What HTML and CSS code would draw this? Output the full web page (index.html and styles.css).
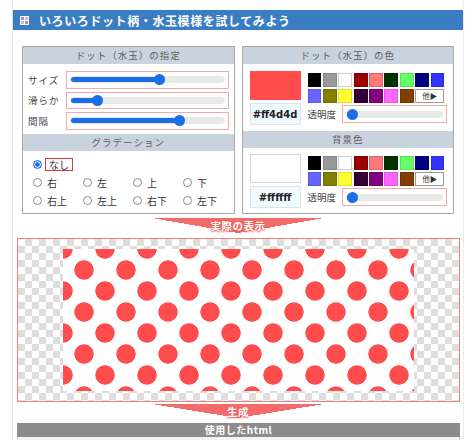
FILE: index.html
```html
<!DOCTYPE html>
<html lang="ja">
<head>
<meta charset="utf-8">
<title>いろいろドット柄・水玉模様を試してみよう</title>
<link rel="stylesheet" href="styles.css">
</head>
<body>
<div class="page">
  <h1 class="title">
    <svg class="ico" width="9" height="9" viewBox="0 0 9 9" aria-hidden="true">
      <rect x="0" y="0" width="9" height="9" fill="#ffffff"/>
      <rect x="1" y="1" width="3" height="3" fill="#9d8fe0"/>
      <rect x="5" y="1" width="3" height="3" fill="#c4b8f0"/>
      <rect x="1" y="5" width="3" height="3" fill="#c4b8f0"/>
      <rect x="5" y="5" width="3" height="3" fill="#9d8fe0"/>
    </svg>
    <span>いろいろドット柄・水玉模様を試してみよう</span>
  </h1>

  <div class="panels">
    <div class="panel">
      <div class="ph">ドット（水玉）の指定</div>
      <div class="sliders">
        <div class="srow"><span class="lbl">サイズ</span><div class="sbox"><input type="range" min="0" max="100" value="59" style="--p:58%"></div></div>
        <div class="srow"><span class="lbl">滑らか</span><div class="sbox"><input type="range" min="0" max="100" value="15" style="--p:17%"></div></div>
        <div class="srow"><span class="lbl">間隔</span><div class="sbox"><input type="range" min="0" max="100" value="73" style="--p:72%"></div></div>
      </div>
      <div class="ph">グラデーション</div>
      <div class="radios">
        <div class="rrow">
          <label class="ropt"><input type="radio" name="g" checked><span class="none">なし</span></label>
        </div>
        <div class="rrow rgrid">
          <label class="ropt"><input type="radio" name="g"><span>右</span></label>
          <label class="ropt"><input type="radio" name="g"><span>左</span></label>
          <label class="ropt"><input type="radio" name="g"><span>上</span></label>
          <label class="ropt"><input type="radio" name="g"><span>下</span></label>
        </div>
        <div class="rrow rgrid">
          <label class="ropt"><input type="radio" name="g"><span>右上</span></label>
          <label class="ropt"><input type="radio" name="g"><span>左上</span></label>
          <label class="ropt"><input type="radio" name="g"><span>右下</span></label>
          <label class="ropt"><input type="radio" name="g"><span>左下</span></label>
        </div>
      </div>
    </div>

    <div class="panel">
      <div class="ph">ドット（水玉）の色</div>
      <div class="csec">
        <div class="cleft">
          <div class="swatch sw-red"></div>
          <div class="hex">#ff4d4d</div>
        </div>
        <div class="cright">
          <div class="palette">
            <span class="cell c1"></span><span class="cell c2"></span><span class="cell c3"></span><span class="cell c4"></span><span class="cell c5"></span><span class="cell c6"></span><span class="cell c7"></span><span class="cell c8"></span><span class="cell c9"></span>
            <span class="cell c10"></span><span class="cell c11"></span><span class="cell c12"></span><span class="cell c13"></span><span class="cell c14"></span><span class="cell c15"></span><span class="cell c16"></span><span class="other">他▶</span>
          </div>
          <div class="alpha"><span class="albl">透明度</span><div class="sbox"><input type="range" min="0" max="100" value="0" style="--p:6%"></div></div>
        </div>
      </div>
      <div class="ph">背景色</div>
      <div class="csec csec2">
        <div class="cleft">
          <div class="swatch sw-white"></div>
          <div class="hex">#ffffff</div>
        </div>
        <div class="cright">
          <div class="palette">
            <span class="cell c1"></span><span class="cell c2"></span><span class="cell c3"></span><span class="cell c4"></span><span class="cell c5"></span><span class="cell c6"></span><span class="cell c7"></span><span class="cell c8"></span><span class="cell c9"></span>
            <span class="cell c10"></span><span class="cell c11"></span><span class="cell c12"></span><span class="cell c13"></span><span class="cell c14"></span><span class="cell c15"></span><span class="cell c16"></span><span class="other">他▶</span>
          </div>
          <div class="alpha"><span class="albl">透明度</span><div class="sbox"><input type="range" min="0" max="100" value="0" style="--p:6%"></div></div>
        </div>
      </div>
    </div>
  </div>

  <div class="arrow a1"><span>実際の表示</span></div>
  <div class="preview"><div class="dots"></div></div>
  <div class="arrow a2"><span>生成</span></div>
  <div class="codebar">使用したhtml</div>
  <div class="codearea"></div>
</div>
</body>
</html>
```

FILE: styles.css
```css
html, body {
  margin: 0;
  padding: 0;
  background: #fff;
}
body {
  font-family: "Noto Sans CJK JP", "Noto Sans", sans-serif;
  color: #333;
}
.page {
  margin-left: 12px;
  width: 452px;
  border-left: 1px solid #e0e0e0;
  border-right: 1px solid #ececec;
  padding-top: 10px;
  height: 440px;
  overflow: hidden;
  box-sizing: border-box;
}
.title {
  margin: 0;
  height: 20px;
  background: #3b7dc3;
  display: flex;
  align-items: center;
  padding-left: 7px;
  gap: 10px;
  color: #fff;
  font-size: 12px;
  font-weight: bold;
  letter-spacing: 0.6px;
}
.ico { display: block; flex: none; }

.panels {
  display: grid;
  grid-template-columns: 1fr 1fr;
  gap: 7px;
  padding: 16px 9px 0;
}
.panel {
  border: 1px solid #a9a9a9;
  background: #fff;
}
.ph {
  height: 17px;
  line-height: 17px;
  background: #c9d3de;
  text-align: center;
  font-size: 9.5px;
  color: #5e5e5e;
  letter-spacing: 1px;
}

/* sliders */
.sliders {
  padding: 7px 5px 4px;
  display: flex;
  flex-direction: column;
  gap: 3px;
}
.srow {
  display: flex;
  align-items: center;
  height: 17.5px;
}
.lbl {
  width: 38px;
  font-size: 9.5px;
  color: #444;
  letter-spacing: 1px;
}
.sbox {
  flex: 1;
  height: 100%;
  border: 1px solid #f2a9a9;
  box-sizing: border-box;
  padding: 0 4px;
  display: flex;
  align-items: center;
}
input[type=range] {
  -webkit-appearance: none;
  appearance: none;
  width: 100%;
  height: 11px;
  margin: 0;
  background: transparent;
  display: block;
}
input[type=range]::-webkit-slider-runnable-track {
  height: 5px;
  border-radius: 3px;
  background: linear-gradient(to right, #1a6fe6 var(--p), #e9e9e9 var(--p));
  box-shadow: 0 0 0 0.5px #cfcfcf;
}
input[type=range]::-webkit-slider-thumb {
  -webkit-appearance: none;
  width: 11px;
  height: 11px;
  border-radius: 50%;
  background: #1a6fe6;
  border: none;
  margin-top: -3px;
}

/* radios */
.radios {
  padding: 5px 0 3px 10px;
}
.rrow {
  height: 18px;
  display: flex;
  align-items: center;
}
.rgrid {
  display: grid;
  grid-template-columns: repeat(4, 50px);
  align-items: center;
}
.ropt {
  display: flex;
  align-items: center;
  gap: 5px;
  font-size: 10px;
  color: #333;
}
.ropt input[type=radio] {
  -webkit-appearance: none;
  appearance: none;
  width: 9px;
  height: 9px;
  border: 1px solid #8a8a8a;
  border-radius: 50%;
  margin: 0;
  box-sizing: border-box;
  background: #fff;
  flex: none;
}
.ropt input[type=radio]:checked {
  border-color: #1a6fe6;
  background: radial-gradient(circle, #1a6fe6 0 2px, #ffffff 2.5px 3px, #3d86ee 3.4px);
}
.none {
  border: 1px solid #d63c3c;
  padding: 0 3px;
  line-height: 11px;
  margin-left: -2px;
}

/* colors */
.csec {
  display: flex;
  gap: 7px;
  padding: 7px 0 6px 7px;
}
.csec2 {
  padding: 6px 0 5px 7px;
}
.cleft {
  width: 51px;
  display: flex;
  flex-direction: column;
  gap: 3px;
}
.swatch {
  height: 29px;
  box-sizing: border-box;
}
.sw-red { background: #ff4d4d; }
.sw-white { background: #fff; border: 1px solid #d6d6d6; }
.hex {
  height: 22px;
  box-sizing: border-box;
  background: #eefafd;
  border: 1px solid #dde3e6;
  font-family: "DejaVu Sans", sans-serif;
  font-weight: bold;
  font-size: 10px;
  color: #222;
  display: flex;
  align-items: center;
  justify-content: center;
}
.cright {
  width: 139px;
}
.palette {
  width: 137px;
  display: grid;
  grid-template-columns: repeat(9, 1fr);
  column-gap: 1.4px;
  row-gap: 2px;
  margin-top: 1.5px;
}
.cell {
  height: 14px;
  box-sizing: border-box;
  border: 1px solid rgba(0,0,0,0.12);
}
.c1 { background: #000000; }
.c2 { background: #999999; }
.c3 { background: #ffffff; border-color: #cfcfcf; }
.c4 { background: #990000; }
.c5 { background: #ff7777; }
.c6 { background: #003300; }
.c7 { background: #66ff66; }
.c8 { background: #000080; }
.c9 { background: #3333ff; }
.c10 { background: #6666ff; }
.c11 { background: #808000; }
.c12 { background: #ffff33; }
.c13 { background: #330033; }
.c14 { background: #800080; }
.c15 { background: #ff66ff; }
.c16 { background: #804000; }
.other {
  grid-column: span 2;
  height: 14px;
  box-sizing: border-box;
  background: #fff;
  border: 1px solid #9a9a9a;
  font-size: 7.5px;
  color: #333;
  display: flex;
  align-items: center;
  justify-content: center;
}
.alpha {
  display: flex;
  align-items: center;
  margin-top: 2.5px;
  height: 18px;
}
.albl {
  width: 34px;
  font-size: 9.5px;
  color: #444;
}

/* arrows */
.arrow {
  width: 172px;
  height: 15px;
  margin: 4px auto 0;
  background:
    linear-gradient(to bottom left, #f36b6b 50%, transparent 50%) left top / 50% 100% no-repeat,
    linear-gradient(to bottom right, #f36b6b 50%, transparent 50%) right top / 50% 100% no-repeat;
  text-align: center;
  color: #fff;
  font-size: 10.5px;
  font-weight: bold;
  line-height: 15px;
  letter-spacing: 0.5px;
  text-shadow: 0 0 1px #ee5c5c, 0 0 2px #ee5c5c, 0 1px 2px #ee5c5c;
}
.a2 {
  margin-top: 2px;
  height: 14px;
  line-height: 15px;
}

/* preview */
.preview {
  margin: 5px 3px 0 4px;
  border: 1px solid #f08080;
  padding: 10px 45px;
  background-color: #fff;
  background-image: conic-gradient(#dddddd 0 25%, #ffffff 0 50%, #dddddd 0 75%, #ffffff 0);
  background-size: 14px 14px;
}
.dots {
  height: 142px;
  background-color: #fff;
  background-image:
    radial-gradient(circle, #ff4d4d 9.3px, transparent 10px),
    radial-gradient(circle, #ff4d4d 9.3px, transparent 10px);
  background-size: 42px 42px;
  background-position: 0 0, 21px 21px;
}

/* code */
.codebar {
  margin: 5px 3px 0 4px;
  height: 14px;
  line-height: 14px;
  background: #8c8c8c;
  color: #fff;
  text-align: center;
  font-size: 10px;
  font-weight: bold;
  letter-spacing: 0.5px;
}
.codearea {
  margin: 0 3px 0 4px;
  height: 3px;
  border-left: 1px solid #cfcfcf;
  border-right: 1px solid #cfcfcf;
  background: #f4f4f4;
}
```
